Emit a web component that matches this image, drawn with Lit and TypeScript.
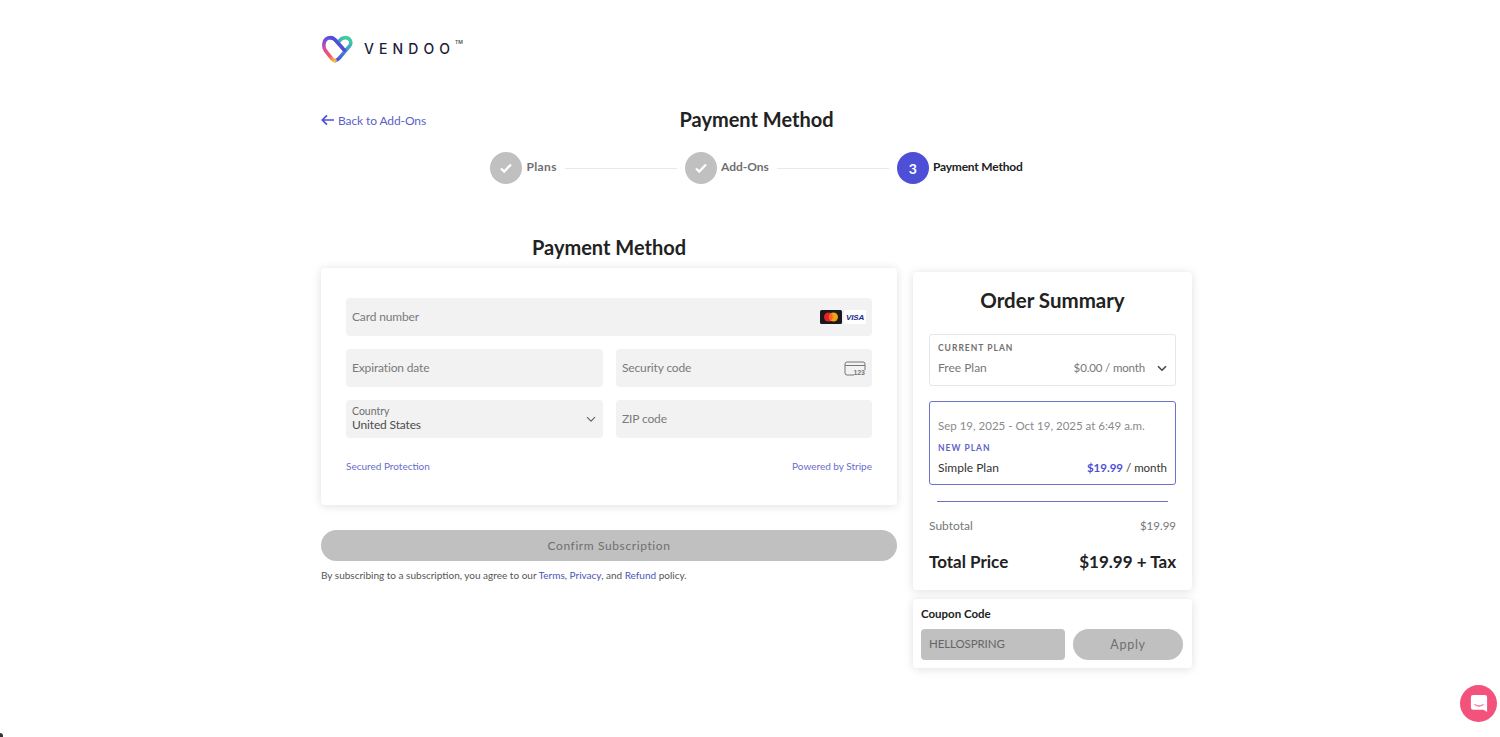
import { LitElement, html, css } from "lit";
import { customElement } from "lit/decorators.js";

const check = html`<svg width="14" height="12" viewBox="0 0 14 12" fill="none"><path d="M2 6.5 5.2 9.6 12 2.4" stroke="#fff" stroke-width="2.2"/></svg>`;
const chevron = html`<svg width="10" height="7" viewBox="0 0 10 7" fill="none"><path d="M1 1.2 5 5.2 9 1.2" stroke="#444" stroke-width="1.5"/></svg>`;
const chevronThin = html`<svg width="10" height="7" viewBox="0 0 10 7" fill="none"><path d="M1 1.2 5 5.2 9 1.2" stroke="#666" stroke-width="1.2"/></svg>`;

@customElement("app-root")
export class AppRoot extends LitElement {
  static styles = css`
    :host { display: block; height: 737px; background: #fff; font-family: Lato, "Noto Sans", sans-serif; color: #222; overflow: hidden; position: relative; }
    .page { width: 871px; margin-left: 321px; display: flex; flex-direction: column; }
    .logo { display: flex; align-items: center; height: 30px; margin-top: 34px; gap: 11px; }
    .mark { margin-left: 1px; }
    .wordmark { font-family: Inter, sans-serif; font-size: 14px; font-weight: 500; letter-spacing: 5.1px; color: #1d1d3a; position: relative; line-height: 18px; }
    .tm { position: absolute; font-size: 5px; letter-spacing: 0; left: 91px; top: -1px; line-height: 6px; font-weight: 600; color: #555; }
    .head { display: grid; grid-template-columns: 1fr auto 1fr; align-items: center; margin-top: 40px; height: 30px; }
    .back { display: flex; align-items: center; gap: 4px; color: #5b5fc7; font-size: 12px; letter-spacing: -.1px; padding-top: 2px; }
    h1 { margin: 0; font-size: 20px; font-weight: 700; color: #222; line-height: 30px; }
    .steps { display: flex; align-items: center; justify-content: center; margin-top: 18px; height: 32px; }
    .dot { width: 32px; height: 32px; border-radius: 50%; background: #c0c0c0; display: flex; align-items: center; justify-content: center; color: #fff; font-size: 14px; font-weight: 700; flex: none; }
    .dot.on { background: #4d50d6; }
    .slabel { font-size: 12px; font-weight: 700; color: #6f6f6f; margin: 0 0 3px 4px; white-space: nowrap; }
    .slabel.first { letter-spacing: .4px; }
    .slabel.on { color: #222; letter-spacing: -.2px; }
    .line { width: 112px; height: 1px; background: #e9e9e9; margin: 0 8px; }
    .main { display: grid; grid-template-columns: 576px 279px; column-gap: 16px; margin-top: 48px; }
    .left { display: flex; flex-direction: column; }
    h2 { margin: 0; font-size: 20px; font-weight: 700; text-align: center; line-height: 30px; height: 30px; color: #222; }
    .card { background: #fff; border-radius: 4px; box-shadow: 0 1px 10px rgba(0,0,0,.13); }
    .form { margin-top: 6px; height: 237px; box-sizing: border-box; padding: 30px 25px 0 25px; display: grid; grid-template-columns: 257px 256px; column-gap: 13px; grid-auto-rows: 38px; row-gap: 13px; align-content: start; }
    .field { background: #f2f2f2; border-radius: 4px; display: flex; align-items: center; justify-content: space-between; padding: 0 6px; color: #7a7a7a; font-size: 12px; letter-spacing: -.15px; }
    .field > .t { margin-bottom: 2px; }
    .wide { grid-column: 1 / -1; }
    .brands { display: flex; gap: 2px; }
    .cstack { display: flex; flex-direction: column; line-height: 13px; margin-bottom: 2px; }
    .cstack small { font-size: 10.5px; color: #6e6e6e; letter-spacing: 0; }
    .cstack span { font-size: 12px; color: #4c4c4c; }
    .chev { margin-right: 1px; display: flex; }
    .foot { grid-column: 1 / -1; display: flex; justify-content: space-between; align-items: center; color: #6a6dcc; font-size: 10px; height: 30px; }
    .confirm { margin-top: 25px; height: 31px; border-radius: 16px; background: #c0c0c0; color: #6f6f6f; display: flex; align-items: center; justify-content: center; font-size: 12px; letter-spacing: .6px; }
    .terms { margin-top: 7px; font-size: 10px; line-height: 14px; color: #555; }
    .terms b { font-weight: 400; color: #4a55b8; }
    .right { display: flex; flex-direction: column; margin-top: 40px; }
    .summary { height: 318px; box-sizing: border-box; padding: 0 16px; display: flex; flex-direction: column; }
    h3 { margin: 13px 0 19px; font-size: 20.5px; font-weight: 700; text-align: center; line-height: 30px; color: #222; }
    .plan { border: 1px solid #e6e6e6; border-radius: 3px; height: 52px; box-sizing: border-box; padding: 7px 8px 0; }
    .kicker { font-size: 8.5px; font-weight: 700; letter-spacing: 1px; color: #6f6f6f; line-height: 12px; }
    .row { display: flex; justify-content: space-between; align-items: center; }
    .cur { font-size: 12px; color: #777; margin-top: 6px; line-height: 16px; }
    .cur .r { display: flex; align-items: center; gap: 12px; font-size: 11.5px; letter-spacing: -.15px; }
    .new { border: 1px solid #6d70cf; border-radius: 3px; height: 84px; box-sizing: border-box; margin-top: 15px; padding: 16px 8px 0; }
    .date { font-size: 11.5px; color: #8a8a8a; line-height: 16px; }
    .new .kicker { color: #6063cc; margin-top: 8px; }
    .sel { font-size: 12px; color: #333; line-height: 16px; margin-top: 6px; }
    .sel .p { font-size: 11.5px; }
    .sel b { color: #4d50d6; font-weight: 700; }
    .rule { height: 1px; background: #6d70c0; margin: 16px 8px 0; }
    .sub { font-size: 12px; color: #777; margin-top: 16px; line-height: 16px; }
    .sub .p { font-size: 11.5px; }
    .total { font-size: 17px; font-weight: 700; color: #222; margin-top: 16px; line-height: 24px; }
    .coupon { margin-top: 9px; height: 69px; box-sizing: border-box; padding: 7px 8px 8px; }
    .clabel { font-size: 11.5px; font-weight: 700; color: #222; line-height: 16px; }
    .cform { display: flex; gap: 8px; margin-top: 7px; height: 31px; }
    .code { width: 144px; background: #c0c0c0; border-radius: 4px; display: flex; align-items: center; padding: 0 0 2px 8px; box-sizing: border-box; font-size: 11.5px; letter-spacing: -.1px; color: #666; }
    .apply { width: 110px; background: #c0c0c0; border-radius: 16px; display: flex; align-items: center; justify-content: center; font-size: 12.5px; letter-spacing: .7px; color: #6f6f6f; }
    .chat { position: absolute; right: 3px; bottom: 15px; width: 37px; height: 37px; border-radius: 50%; background: #f2527c; display: flex; align-items: center; justify-content: center; }
    .corner { position: absolute; left: 0; bottom: 0; width: 3px; height: 4px; background: #333; border-top-right-radius: 3px; }
  `;

  render() {
    return html`
      <div class="page">
        <div class="logo">
          <svg class="mark" width="31" height="28" viewBox="0 0 33 30" fill="none">
            <defs>
              <linearGradient id="la" gradientUnits="userSpaceOnUse" x1="6" y1="2" x2="14" y2="28"><stop offset="0" stop-color="#5a50dc"/><stop offset=".4" stop-color="#d84aa8"/><stop offset=".75" stop-color="#f2565f"/><stop offset="1" stop-color="#f6c143"/></linearGradient>
              <linearGradient id="lb" gradientUnits="userSpaceOnUse" x1="16" y1="26" x2="28" y2="3"><stop offset="0" stop-color="#4a55d8"/><stop offset=".55" stop-color="#3a9bd0"/><stop offset="1" stop-color="#46cf9c"/></linearGradient>
            </defs>
            <path d="M17 8.500C19 5 22 2.800 25 2.800c5 0 7.300 5.400 4.500 8.900L20 23c-2.200 2.700-4 4.500-6 4.500" stroke="url(#lb)" stroke-width="3.800" stroke-linecap="round"/>
            <path d="M14 27.500c-1.500 0-2.500-.8-3.500-2L3.800 17C.6 13 1 3 9 2.800c2 0 3.500.8 5 2.400L24 16.500" stroke="url(#la)" stroke-width="3.800" stroke-linecap="round"/>
            <path d="M9.500 2.900c1.800.1 3.200.9 4.500 2.300L24 16.500" stroke="#4a50d8" stroke-width="3.800" stroke-linecap="round"/>
          </svg>
          <div class="wordmark">VENDOO<span class="tm">TM</span></div>
        </div>
        <div class="head">
          <div class="back">
            <svg width="13" height="12" viewBox="0 0 13 12" fill="none"><path d="M13 6H1.500M6 1.300 1.300 6 6 10.700" stroke="#4d50d6" stroke-width="1.700"/></svg>
            <span>Back to Add-Ons</span>
          </div>
          <h1>Payment Method</h1>
          <div></div>
        </div>
        <div class="steps">
          <div class="dot">${check}</div><div class="slabel first">Plans</div>
          <div class="line"></div>
          <div class="dot">${check}</div><div class="slabel">Add-Ons</div>
          <div class="line"></div>
          <div class="dot on">3</div><div class="slabel on">Payment Method</div>
        </div>
        <div class="main">
          <div class="left">
            <h2>Payment Method</h2>
            <div class="card form">
              <div class="field wide">
                <span class="t">Card number</span>
                <span class="brands">
                  <svg width="22" height="14" viewBox="0 0 22 14"><rect width="22" height="14" rx="1.500" fill="#1a1a1a"/><circle cx="8.500" cy="7" r="4.500" fill="#e8202a"/><circle cx="13.500" cy="7" r="4.500" fill="#f79e1b"/><path d="M11 3.300a4.500 4.500 0 0 1 0 7.400 4.500 4.500 0 0 1 0-7.400z" fill="#f26522"/></svg>
                  <svg width="22" height="14" viewBox="0 0 22 14"><rect width="22" height="14" rx="1" fill="#fff"/><text x="11" y="10" text-anchor="middle" font-family="Liberation Sans" font-size="8" font-weight="700" font-style="italic" fill="#1a2b8f">VISA</text></svg>
                </span>
              </div>
              <div class="field"><span class="t">Expiration date</span></div>
              <div class="field">
                <span class="t">Security code</span>
                <svg width="22" height="15" viewBox="0 0 22 15" fill="none"><path d="M10 14H3a2 2 0 0 1-2-2V3a2 2 0 0 1 2-2h16a2 2 0 0 1 2 2v6M1 4.500h20" stroke="#777" stroke-width="1"/><text x="9.500" y="14" font-family="Liberation Sans" font-size="7" font-weight="700" fill="#777">123</text></svg>
              </div>
              <div class="field">
                <div class="cstack"><small>Country</small><span>United States</span></div>
                <span class="chev">${chevronThin}</span>
              </div>
              <div class="field"><span class="t">ZIP code</span></div>
              <div class="foot"><span>Secured Protection</span><span>Powered by Stripe</span></div>
            </div>
            <div class="confirm">Confirm Subscription</div>
            <div class="terms">By subscribing to a subscription, you agree to our <b>Terms</b>, <b>Privacy</b>, and <b>Refund</b> policy.</div>
          </div>
          <div class="right">
            <div class="card summary">
              <h3>Order Summary</h3>
              <div class="plan">
                <div class="kicker">CURRENT PLAN</div>
                <div class="row cur"><span>Free Plan</span><span class="r"><span>$0.00 / month</span>${chevron}</span></div>
              </div>
              <div class="new">
                <div class="date">Sep 19, 2025 - Oct 19, 2025 at 6:49 a.m.</div>
                <div class="kicker">NEW PLAN</div>
                <div class="row sel"><span>Simple Plan</span><span class="p"><b>$19.99</b> / month</span></div>
              </div>
              <div class="rule"></div>
              <div class="row sub"><span>Subtotal</span><span class="p">$19.99</span></div>
              <div class="row total"><span>Total Price</span><span>$19.99 + Tax</span></div>
            </div>
            <div class="card coupon">
              <div class="clabel">Coupon Code</div>
              <div class="cform"><div class="code">HELLOSPRING</div><div class="apply">Apply</div></div>
            </div>
          </div>
        </div>
      </div>
      <div class="chat">
        <svg width="18" height="19" viewBox="0 0 20 21" fill="none"><path d="M3.500 1h13A2.500 2.500 0 0 1 19 3.500V20l-4-2.500H3.500A2.500 2.500 0 0 1 1 15V3.500A2.500 2.500 0 0 1 3.500 1z" fill="#fff"/><path d="M5 11.500c3 2.200 7 2.200 10 0" stroke="#f2527c" stroke-width="1.300"/></svg>
      </div>
      <div class="corner"></div>
    `;
  }
}
